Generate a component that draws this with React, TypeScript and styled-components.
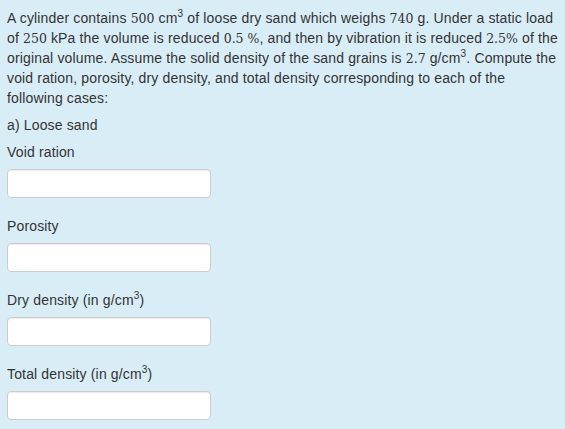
import styled, { createGlobalStyle } from 'styled-components';

const GlobalStyle = createGlobalStyle`
  html, body {
    margin: 0;
    padding: 0;
    background: #d9edf7;
  }
`;

const Panel = styled.div`
  background: #d9edf7;
  min-height: 429px;
  padding: 8px 7px 0 7px;
  box-sizing: border-box;
  font-family: "Liberation Sans", Arial, sans-serif;
  font-size: 14px;
  line-height: 20px;
  letter-spacing: 0.15px;
  color: #333;
`;

const Question = styled.p`
  margin: 0 0 7px 0;
`;

const Num = styled.span`
  font-family: "DejaVu Serif", "Liberation Serif", serif;
  font-size: 12.5px;
  line-height: 0;
  letter-spacing: 0;
`;

const Sup = styled.sup`
  font-size: 10px;
  line-height: 0;
  vertical-align: 6px;
`;

const Case = styled.div`
  margin-bottom: 7px;
`;

const Field = styled.div`
  display: flex;
  flex-direction: column;
  gap: 7px;
  margin-bottom: 18px;
`;

const Label = styled.label`
  display: block;
`;

const Input = styled.input`
  width: 204px;
  height: 29px;
  box-sizing: border-box;
  border: 1px solid #ccc;
  border-radius: 4px;
  background: #fff;
  box-shadow: inset 0 1px 1px rgba(0, 0, 0, 0.075);
  outline: none;
  padding: 4px 8px;
  font: inherit;
`;

const cm3 = (
  <>
    cm<Sup>3</Sup>
  </>
);

const fields = [
  { label: <>Void ration</> },
  { label: <>Porosity</> },
  { label: <>Dry density (in g/{cm3})</> },
  { label: <>Total density (in g/{cm3})</> },
];

export default function App() {
  return (
    <>
      <GlobalStyle />
      <Panel>
        <Question>
          A cylinder contains <Num>500</Num> {cm3} of loose dry sand which weighs <Num>740</Num> g. Under a
          static load of <Num>250</Num> kPa the volume is reduced <Num>0.5 %</Num>, and then by vibration it is
          reduced <Num>2.5%</Num> of the original volume. Assume the solid density of the sand grains is{' '}
          <Num>2.7</Num> g/{cm3}. Compute the void ration, porosity, dry density, and total density
          corresponding to each of the following cases:
        </Question>
        <Case>a) Loose sand</Case>
        {fields.map((f, i) => (
          <Field key={i}>
            <Label>{f.label}</Label>
            <Input type="text" />
          </Field>
        ))}
      </Panel>
    </>
  );
}
